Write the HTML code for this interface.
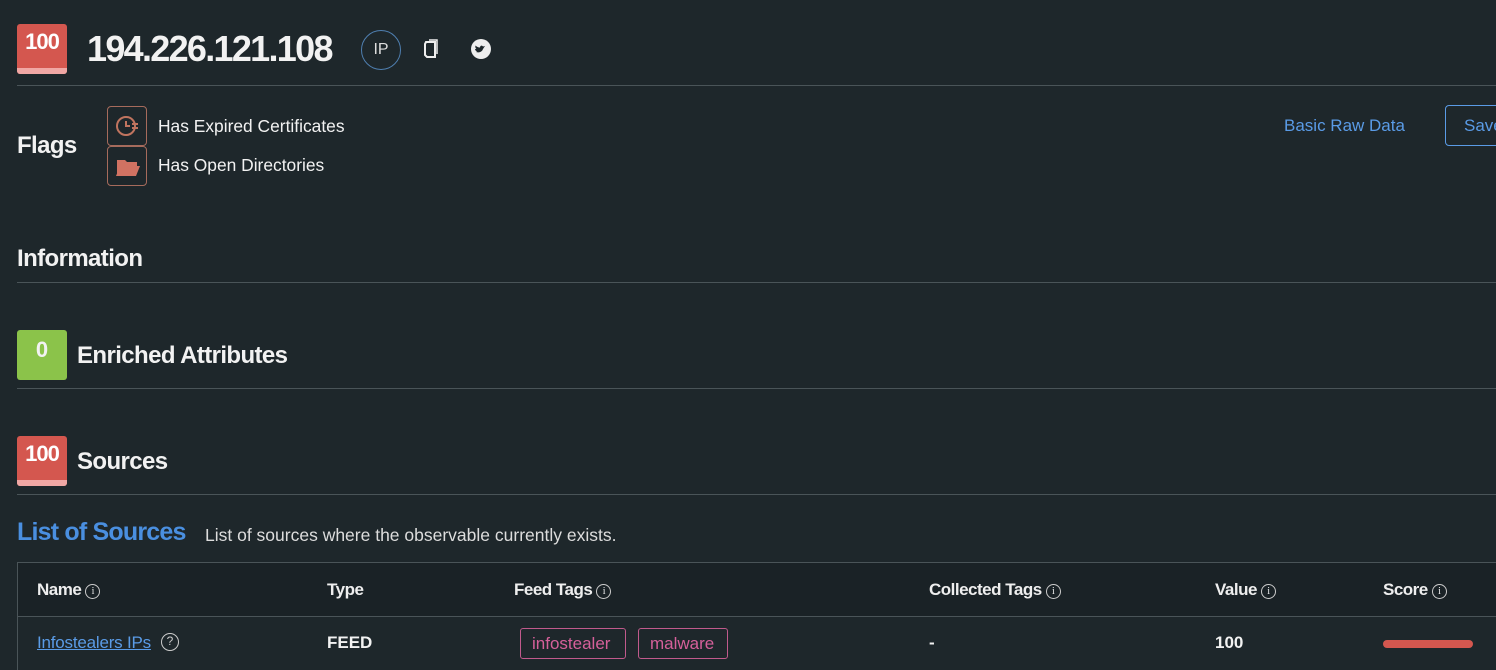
<!DOCTYPE html>
<html><head><meta charset="utf-8"><style>
*{margin:0;padding:0;box-sizing:border-box}
html{overflow:hidden}
body{width:1496px;height:670px;overflow:hidden;background:#1e272b;font-family:"Liberation Sans",sans-serif;color:#f2f2f2;position:relative}
.a{position:absolute}
.badge{position:absolute;width:50px;height:50px;border-radius:3px;background:#d4574f;color:#fff;font-weight:bold;font-size:22px;text-align:center;line-height:36px;letter-spacing:-1px;overflow:hidden}
.badge:after{content:"";position:absolute;left:0;right:0;bottom:0;height:6px;background:#f0a7a4}
.line{position:absolute;left:17px;width:1479px;height:1px;background:#4a5458}
.h{font-weight:bold;font-size:24px;letter-spacing:-0.6px}
.i{display:inline-block;width:15px;height:15px;border:1px solid #ccc;border-radius:50%;font-size:10px;line-height:13px;text-align:center;font-weight:normal;vertical-align:1px;margin-left:4px;font-family:"Liberation Serif",serif}
.th{position:absolute;top:580px;font-weight:bold;font-size:17px;letter-spacing:-0.5px;color:#eee}
.tag{position:absolute;top:628px;height:31px;border:1px solid #c05a8c;border-radius:3px;color:#d5609a;font-size:17px;line-height:29px;padding:0 11px}
.fi{position:absolute;left:107px;width:40px;height:40px;border:1px solid #a66b5c;border-radius:4px}
</style></head><body>
<div class="badge" style="left:17px;top:24px">100</div>
<div class="a" style="left:87px;top:28px;font-size:36px;font-weight:bold;letter-spacing:-1.7px">194.226.121.108</div>
<div class="a" style="left:361px;top:30px;width:40px;height:40px;border:1px solid #4f7fb0;border-radius:50%;text-align:center;line-height:38px;font-size:16px;color:#ddd">IP</div>
<svg class="a" style="left:421px;top:39px" width="18" height="22" viewBox="0 0 18 22"><path d="M5 3h9v15H6l-2-2V5z" fill="none" stroke="#eee" stroke-width="2"/><path d="M8 1h8v14" fill="none" stroke="#eee" stroke-width="1.5"/></svg>
<svg class="a" style="left:471px;top:39px" width="20" height="20" viewBox="0 0 20 20"><circle cx="10" cy="10" r="10" fill="#eee"/><path d="M5 13c3 1 6 0 7-3l2-3-2 .5c-1-1.5-3-1-3 1-2 0-3.5-1-4.5-2 -.5 1.5 0 3 1 3.5-1 0-1 0-1.5 0 0 1 1 2 2 2.5-.5.5-1.5 .5-1 .5z" fill="#1e272b"/></svg>
<div class="line" style="top:85px"></div>
<div class="a h" style="left:17px;top:132px">Flags</div>
<div class="fi" style="top:106px"><svg width="40" height="40" viewBox="0 0 40 40"><circle cx="18" cy="19" r="9" fill="none" stroke="#c0745f" stroke-width="2"/><path d="M18 14v5h4M24 17h6M24 21h6" stroke="#c0745f" stroke-width="2" fill="none"/></svg></div>
<div class="fi" style="top:146px"><svg width="40" height="40" viewBox="0 0 40 40"><path d="M9 13h8l2 2h10v4H13l-4 10z" fill="#d17262"/><path d="M12 19h20l-4 10H8z" fill="#d17262"/></svg></div>
<div class="a" style="left:158px;top:116px;font-size:17.4px">Has Expired Certificates</div>
<div class="a" style="left:158px;top:155px;font-size:17.4px">Has Open Directories</div>
<div class="a" style="left:1284px;top:116px;font-size:17px;color:#5a9be6">Basic Raw Data</div>
<div class="a" style="left:1445px;top:105px;width:80px;height:41px;border:1px solid #5a9be6;border-radius:4px;color:#5a9be6;font-size:17px;line-height:39px;padding-left:18px">Save</div>
<div class="a h" style="left:17px;top:245px">Information</div>
<div class="line" style="top:282px"></div>
<div class="a" style="left:17px;top:330px;width:50px;height:50px;border-radius:3px;background:#8bc34a;font-weight:bold;font-size:22px;text-align:center;line-height:40px">0</div>
<div class="a h" style="left:77px;top:342px">Enriched Attributes</div>
<div class="line" style="top:388px"></div>
<div class="badge" style="left:17px;top:436px">100</div>
<div class="a h" style="left:77px;top:448px">Sources</div>
<div class="line" style="top:494px"></div>
<div class="a" style="left:17px;top:518px;font-size:25px;font-weight:bold;color:#4a8fe0;letter-spacing:-0.8px">List of Sources</div>
<div class="a" style="left:205px;top:525px;font-size:17.5px;color:#ddd">List of sources where the observable currently exists.</div>
<div class="a" style="left:17px;top:562px;width:1479px;height:55px;background:#1a2226;border-top:1px solid #4a5458;border-left:1px solid #4a5458;border-bottom:1px solid #4a5458"></div>
<div class="a" style="left:17px;top:616px;width:1px;height:54px;background:#4a5458"></div>
<div class="th" style="left:37px">Name<span class="i">i</span></div>
<div class="th" style="left:327px">Type</div>
<div class="th" style="left:514px">Feed Tags<span class="i">i</span></div>
<div class="th" style="left:929px">Collected Tags<span class="i">i</span></div>
<div class="th" style="left:1215px">Value<span class="i">i</span></div>
<div class="th" style="left:1383px">Score<span class="i">i</span></div>
<div class="a" style="left:37px;top:633px;font-size:17px;color:#5a9be6;text-decoration:underline;letter-spacing:-0.2px">Infostealers IPs</div>
<div class="a" style="left:161px;top:633px;width:18px;height:18px;border:1.5px solid #ccc;border-radius:50%;font-size:12px;text-align:center;line-height:15px;color:#ccc">?</div>
<div class="a" style="left:327px;top:633px;font-size:17px;font-weight:bold">FEED</div>
<div class="tag" style="left:520px;width:106px">infostealer</div>
<div class="tag" style="left:638px;width:90px">malware</div>
<div class="a" style="left:929px;top:633px;font-size:17px;font-weight:bold">-</div>
<div class="a" style="left:1215px;top:633px;font-size:17px;font-weight:bold">100</div>
<div class="a" style="left:1383px;top:640px;width:90px;height:8px;border-radius:4px;background:#d4574f"></div>
</body></html>
